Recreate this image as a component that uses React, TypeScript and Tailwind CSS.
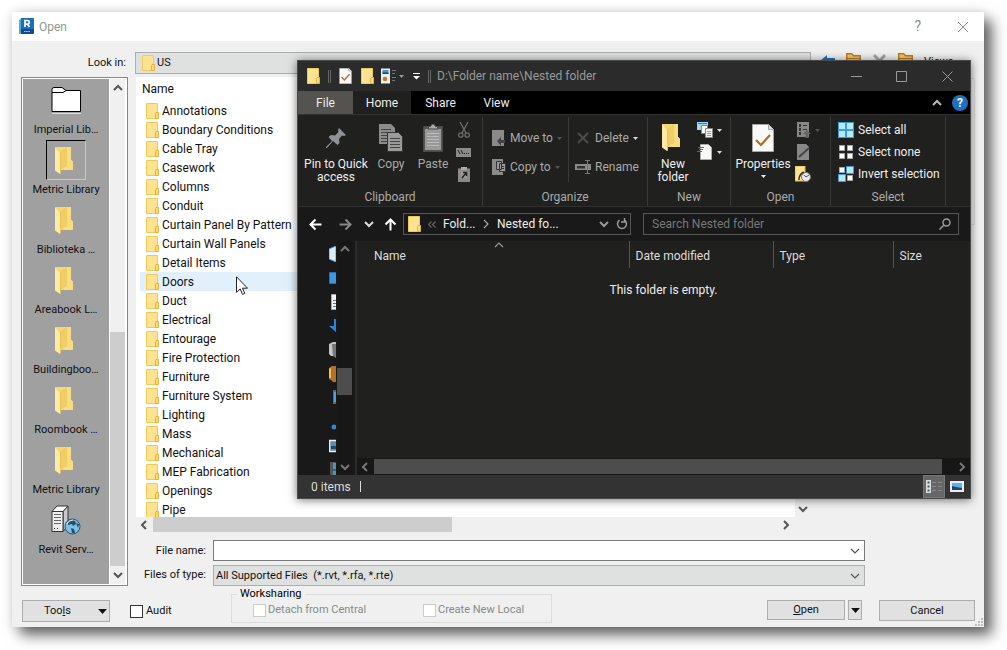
import type { ReactNode, SVGProps } from "react";
import { clsx } from "clsx";

const PLACES = [
  { label: "Imperial Lib…", icon: "outline" },
  { label: "Metric Library", icon: "folder", active: true },
  { label: "Biblioteka …", icon: "folder" },
  { label: "Areabook L…", icon: "folder" },
  { label: "Buildingboo…", icon: "folder" },
  { label: "Roombook …", icon: "folder" },
  { label: "Metric Library", icon: "folder" },
  { label: "Revit Serv…", icon: "server" },
];

const FOLDERS = [
  "Annotations",
  "Boundary Conditions",
  "Cable Tray",
  "Casework",
  "Columns",
  "Conduit",
  "Curtain Panel By Pattern",
  "Curtain Wall Panels",
  "Detail Items",
  "Doors",
  "Duct",
  "Electrical",
  "Entourage",
  "Fire Protection",
  "Furniture",
  "Furniture System",
  "Lighting",
  "Mass",
  "Mechanical",
  "MEP Fabrication",
  "Openings",
  "Pipe",
];

/* ---------- icons ---------- */

function FolderIcon({ className = "" }: { className?: string }) {
  return (
    <svg className={clsx("h-4 w-[13px] shrink-0", className)} viewBox="0 0 13 16">
      <path d="M.5.5h11v8.5h-1v6.500H.5z" fill="#ffe391" stroke="#efca5a" />
      <path d="M10 9.500h2.500v6H9.500v-5z" fill="#fbdc7c" stroke="#e3b33c" />
    </svg>
  );
}

function OpenFolderIcon({ className = "" }: { className?: string }) {
  return (
    <svg className={clsx("h-[27px] w-[18px] shrink-0", className)} viewBox="0 0 18 27">
      <path d="M0 0h16v13l2 2v8H4z" fill="#f7d774" />
      <path d="M9 0h7v13l2 2v8H9z" fill="#fade82" />
      <path d="M5 5l6-5h5v13l-4 6-7 4z" fill="#f1cd66" />
      <path d="M12 0h4v13l2 2v8h-6z" fill="#f9dc7f" />
      <path d="M0 0l5 6v21l-5-3.500z" fill="#fdeaa6" />
      <path d="M5 6v21l1-.5V5z" fill="#e9c355" />
    </svg>
  );
}

function OutlineFolderIcon() {
  return (
    <svg className="h-7 w-[31px]" viewBox="0 0 31 28">
      <path d="M1 27.500h29" stroke="#ddd" />
      <path d="M1 25.500V3.500q0-2 2-2h8l4 3h14.500v21H1z" fill="#fff" stroke="#000" />
      <path d="M1 6.500h11l3-2" fill="none" stroke="#000" />
    </svg>
  );
}

function ServerIcon() {
  return (
    <svg className="h-[30px] w-[30px]" viewBox="0 0 30 30">
      <path d="M1 6.500L6 1h11l-5 5.500z" fill="#fff" stroke="#333" />
      <path d="M12 6.500L17 1v20l-5 5.500z" fill="#c9c9c9" stroke="#333" />
      <path d="M1 6.500h11v20H1z" fill="#eee" stroke="#333" />
      <path d="M3 9.500h7M3 12.500h7M3 15.500h7M3 18.500h7" stroke="#666" />
      <path d="M3 23.500h1M6 23.500h1" stroke="#333" />
      <circle cx="21.500" cy="21.500" r="7.500" fill="#7cc0ea" stroke="#1c527c" />
      <path d="M17 17l3-2 4 1 1 3-3 2-1-2-4 1zM20 23l3 1 1 4-3 0zM25 18l3 1-1 4z" fill="#2b4d5e" />
      <path d="M16 19q2-4 6-4" fill="none" stroke="#d7f0ff" />
    </svg>
  );
}

type ChevronProps = { dir: "up" | "down" | "left" | "right"; className?: string; bold?: boolean };

const CHEVRONS = {
  up: "M1 7l4-4 4 4",
  down: "M1 3l4 4 4-4",
  left: "M7 1L3 5l4 4",
  right: "M3 1l4 4-4 4",
};

function Chevron({ dir, className = "", bold }: ChevronProps) {
  return (
    <svg className={clsx("h-[10px] w-[10px] shrink-0", className)} viewBox="0 0 10 10" fill="none" stroke="currentColor" strokeWidth={bold ? 2 : 1.2}>
      <path d={CHEVRONS[dir]} />
    </svg>
  );
}

function Caret({ className = "h-1 w-[7px]" }: { className?: string }) {
  return (
    <svg className={clsx("shrink-0", className)} viewBox="0 0 7 4" fill="currentColor">
      <path d="M0 0h7L3.500 4z" />
    </svg>
  );
}

function Glyph({ className = "", ...props }: SVGProps<SVGSVGElement>) {
  return <svg className={clsx("shrink-0", className)} fill="none" {...props} />;
}

function CheckDoc({ className = "" }: { className?: string }) {
  return (
    <Glyph className={className} viewBox="0 0 22 28">
      <path d="M.5.5h16l5 5v22H.5z" fill="#fafafa" stroke="#a5a5a5" />
      <path d="M16.500.5v5h5" fill="#ddd" stroke="#a5a5a5" />
      <path d="M4 16l5 5L18 11" stroke="#b06a22" strokeWidth="2.200" />
    </Glyph>
  );
}

function RevitLogo() {
  return (
    <svg className="h-[17px] w-[15px]" viewBox="0 0 15 17">
      <path d="M0 2l3-2v14l-2 2H0z" fill="#5aa7dd" />
      <path d="M2 0h12q1 0 1 1v10H2z" fill="#1a6fc0" />
      <path d="M2 11h13v4q0 1-1 1H2z" fill="#124a8c" />
      <path d="M6 9V2.500h2.500a1.800 1.800 0 010 3.600H6M8.500 6L10.500 9" fill="none" stroke="#fff" strokeWidth="1.700" />
      <path d="M5 13.500h6" stroke="#b7cde6" strokeDasharray="1.500 .7" />
    </svg>
  );
}

/* ---------- Revit "Open" dialog ---------- */

function TitleBar() {
  return (
    <header className="flex h-[29px] items-center bg-white pl-[7px] pr-[15px]">
      <RevitLogo />
      <h1 className="ml-[5px] text-[12px] text-[#8f9694]">Open</h1>
      <button aria-label="Help" className="ml-auto text-[14px] text-[#8a8a8a]">
        ?
      </button>
      <button aria-label="Close dialog" className="ml-9 text-[#8a8a8a]">
        <Glyph className="h-[12px] w-[12px]" viewBox="0 0 12 12" stroke="currentColor">
          <path d="M1 1l10 10M11 1L1 11" />
        </Glyph>
      </button>
    </header>
  );
}

function YellowFolder() {
  return (
    <Glyph className="h-[14px] w-[15px]" viewBox="0 0 15 14">
      <path d="M.7.700h5l2 2h6.600v10.600H.7z" fill="#f3c95c" stroke="#bf7a1e" strokeWidth="1.400" />
      <path d="M1 5.500h13" stroke="#bf7a1e" />
    </Glyph>
  );
}

function LookIn() {
  return (
    <div className="flex h-[22px] items-center">
      <label htmlFor="look-in" className="w-[105px] text-right">
        Look in:
      </label>
      <div className="ml-[9px] flex h-[22px] flex-1 items-center border border-[#adadad] bg-[#dfe0e0] pl-[6px] pr-1">
        <FolderIcon />
        <select id="look-in" className="ml-[2px] h-5 min-w-0 flex-1 appearance-none bg-transparent" defaultValue="US">
          <option>US</option>
        </select>
        <Chevron dir="down" className="text-[#555]" />
      </div>
      <div className="ml-[9px] flex w-[155px] items-start gap-[11px] self-start pt-px">
        <button aria-label="Back">
          <Glyph className="h-[14px] w-[15px]" viewBox="0 0 15 14">
            <path d="M0 8L7 2v3h8v6H7v3z" fill="#1f74c4" />
          </Glyph>
        </button>
        <button aria-label="Up one level">
          <YellowFolder />
        </button>
        <button aria-label="Delete">
          <Glyph className="h-[14px] w-[15px]" viewBox="0 0 15 14" stroke="#a5a5a5" strokeWidth="3">
            <path d="M2 2l11 12M13 2L2 14" />
          </Glyph>
        </button>
        <button aria-label="Create new folder">
          <YellowFolder />
        </button>
        <button className="flex flex-1 items-center justify-between pr-1 leading-[18px]">
          Views <Caret />
        </button>
      </div>
    </div>
  );
}

function PlacesBar() {
  return (
    <nav className="flex w-[107px] shrink-0 border border-[#828790] bg-white py-px pl-px pr-[2px]">
      <ul className="flex-1 bg-[#a0a0a0]">
        {PLACES.map((place, i) => (
          <li key={i}>
            <button className="flex h-[60px] w-full flex-col items-center pt-px">
              <span
                className={clsx(
                  "flex h-[40px] w-[40px] items-center justify-center",
                  place.active && "border border-b-[#c8c8c8] border-l-black border-r-[#c8c8c8] border-t-black",
                )}
              >
                {place.icon === "outline" && <OutlineFolderIcon />}
                {place.icon === "folder" && <OpenFolderIcon className="mr-1" />}
                {place.icon === "server" && <ServerIcon />}
              </span>
              <span className="mt-px leading-[18px] text-[#111]">{place.label}</span>
            </button>
          </li>
        ))}
      </ul>
      <div className="ml-px flex w-[15px] flex-col items-center bg-[#f0f0f0] py-1 text-[#555]">
        <Chevron dir="up" bold />
        <div className="mb-1 mt-[239px] w-full flex-1 bg-[#cdcdcd]" />
        <Chevron dir="down" bold />
      </div>
    </nav>
  );
}

function FolderList() {
  return (
    <section className="min-w-0 flex-1">
      <div className="flex">
        <div className="h-[440px] flex-1 overflow-hidden bg-white text-[12px]">
          <h2 className="h-6 pl-[6px] leading-6">Name</h2>
          <ul className="pl-1">
            {FOLDERS.map((name) => (
              <li key={name} className={clsx("flex h-[19px] items-center gap-[3px] pl-[6px]", name === "Doors" && "bg-[#e2f0fc]")}>
                <FolderIcon />
                {name}
              </li>
            ))}
          </ul>
        </div>
        <div className="flex w-4 items-end justify-center pb-[3px] text-[#555]">
          <Chevron dir="down" bold />
        </div>
      </div>
      <div className="flex h-[15px] items-center pl-[3px] pr-5 text-[#555]">
        <Chevron dir="left" bold />
        <div className="ml-1 h-full w-[299px] bg-[#cdcdcd]" />
        <Chevron dir="right" bold className="ml-auto" />
      </div>
    </section>
  );
}

function FileFields() {
  return (
    <div className="mr-[110px] mt-2 flex flex-col gap-1">
      <div className="flex items-center">
        <label htmlFor="file-name" className="w-[70px] shrink-0 pt-px text-right">
          File name:
        </label>
        <div className="ml-[7px] flex h-[21px] flex-1 items-center border border-[#7a7a7a] bg-white pr-1">
          <input id="file-name" className="h-full min-w-0 flex-1 px-1 outline-none" />
          <Chevron dir="down" className="text-[#555]" />
        </div>
      </div>
      <div className="flex items-center">
        <label htmlFor="file-type" className="w-[70px] shrink-0 text-right">
          Files of type:
        </label>
        <div className="ml-[7px] flex h-[21px] flex-1 items-center border border-[#adadad] bg-[#dfe0e0] pr-1">
          <select id="file-type" className="h-full min-w-0 flex-1 appearance-none pl-[2px] pt-px">
            <option>{"All Supported Files\u00a0 (*.rvt, *.rfa, *.rte)"}</option>
          </select>
          <Chevron dir="down" className="text-[#555]" />
        </div>
      </div>
    </div>
  );
}

const CHECKBOX = "h-[13px] w-[13px] appearance-none border bg-white";

function DialogFooter() {
  return (
    <footer className="mt-[6px] flex items-start pl-px">
      <button className="mt-2 flex h-[22px] w-[88px] items-center border border-[#adadad] bg-[#e1e1e1] pl-[21px] pr-[2px]">
        <span>
          Too<u>l</u>s
        </span>
        <Caret className="ml-auto h-[5px] w-[9px]" />
      </button>
      <label className="ml-5 mt-[11px] flex w-[101px] items-center gap-[3px]">
        <input type="checkbox" className={clsx(CHECKBOX, "border-[#333]")} />
        Audit
      </label>
      <fieldset disabled className="-mt-1 h-[35px] w-[321px] border border-[#dcdcdc] text-[#838c88]">
        <legend className="ml-[5px] px-[3px] leading-3 text-black">Worksharing</legend>
        <div className="flex items-center pl-[21px]">
          <label className="flex h-5 w-[170px] items-center gap-[2px]">
            <input type="checkbox" className={clsx(CHECKBOX, "border-[#ccc]")} />
            Detach from Central
          </label>
          <label className="flex h-5 items-center gap-[2px]">
            <input type="checkbox" className={clsx(CHECKBOX, "border-[#ccc]")} />
            Create New Local
          </label>
        </div>
      </fieldset>
      <button className="ml-auto mt-2 h-5 w-[78px] border border-[#adadad] bg-[#e1e1e1] leading-[18px]">
        <u>O</u>pen
      </button>
      <button aria-label="Open options" className="ml-[3px] mt-2 flex h-5 w-[14px] items-center justify-center border border-[#adadad] bg-[#e1e1e1]">
        <Caret className="h-[5px] w-[9px]" />
      </button>
      <button className="ml-[17px] mt-2 h-[21px] w-[96px] border border-[#adadad] bg-[#e1e1e1] pt-px">Cancel</button>
    </footer>
  );
}

/* ---------- Windows Explorer, dark theme ---------- */

function ExplorerTitle() {
  return (
    <header className="flex h-[30px] items-center bg-[#2b2b2b] pl-[9px] pr-[17px] text-[#999]">
      <FolderIcon />
      <span className="ml-2 h-[13px] w-[3px] border-x border-[#666]" />
      <CheckDoc className="ml-2 h-4 w-[13px]" />
      <FolderIcon className="ml-[9px]" />
      <Glyph className="ml-[7px] h-4 w-[16px]" viewBox="0 0 16 16">
        <path d="M0 .5h9v15H0z" fill="#eee" />
        <path d="M1.500 2h6v4h-6z" fill="#3f97d0" />
        <path d="M1.500 4.500h6V6h-6z" fill="#245" />
        <circle cx="4" cy="11" r="2.300" fill="#c07a35" />
        <path d="M11 2.500h4M11 5.500h3M11 9.500h4M11 12.500h3" stroke="#777" />
      </Glyph>
      <Caret className="ml-[2px] h-[3px] w-[5px]" />
      <Glyph className="ml-[9px] h-[7px] w-[7px] text-white" viewBox="0 0 7 7">
        <path d="M0 .5h7" stroke="currentColor" />
        <path d="M0 3h7L3.500 6.500z" fill="currentColor" />
      </Glyph>
      <span className="ml-2 h-[13px] w-[3px] border-x border-[#666]" />
      <span className="ml-[6px]">D:\Folder name\Nested folder</span>
      <button aria-label="Minimize" className="ml-auto">
        <Glyph className="h-[11px] w-[11px]" viewBox="0 0 11 11" stroke="currentColor">
          <path d="M0 5.500h11" />
        </Glyph>
      </button>
      <button aria-label="Maximize" className="ml-[34px]">
        <Glyph className="h-[11px] w-[11px]" viewBox="0 0 11 11" stroke="currentColor">
          <path d="M.5.500h10v10H.5z" />
        </Glyph>
      </button>
      <button aria-label="Close window" className="ml-[35px]">
        <Glyph className="h-[11px] w-[11px]" viewBox="0 0 11 11" stroke="currentColor">
          <path d="M.5.500l10 10M10.500.500l-10 10" />
        </Glyph>
      </button>
    </header>
  );
}

function Tabs() {
  return (
    <div className="flex h-[23px] items-stretch bg-black pr-[2px]">
      <button className="w-[55px] bg-[#555350]">File</button>
      <button className="w-[58px] bg-[#20201f]">Home</button>
      <button className="w-[59px]">Share</button>
      <button className="w-[53px]">View</button>
      <button aria-label="Collapse ribbon" className="ml-auto mr-[10px] text-[#bbb]">
        <Chevron dir="up" bold />
      </button>
      <button aria-label="Explorer help" className="my-1 h-4 w-4 rounded-full bg-[#1e6fc0] text-[12px] font-bold leading-4 text-white">
        ?
      </button>
    </div>
  );
}

function Group({ label, className, children }: { label: string; className: string; children: ReactNode }) {
  return (
    <section className={clsx("flex flex-col border-r border-[#3a3a3a]", className)}>
      <div className="flex h-[72px] items-start">{children}</div>
      <h3 className="text-center leading-[18px] text-[#aaa]">{label}</h3>
    </section>
  );
}

function BigButton({ className, icon, children }: { className: string; icon: ReactNode; children: ReactNode }) {
  return (
    <button className={clsx("flex flex-col items-center leading-[13px]", className)}>
      <span className="flex h-[41px] items-center">{icon}</span>
      {children}
    </button>
  );
}

function SmallButton({ icon, caret, className, children }: { icon: ReactNode; caret?: string; className?: string; children?: ReactNode }) {
  return (
    <button className={clsx("flex h-[22px] items-center gap-1 whitespace-nowrap", className)}>
      {icon}
      {children}
      {caret && <Caret className={clsx("h-[3px] w-[5px]", caret)} />}
    </button>
  );
}

function Ribbon() {
  return (
    <div className="flex h-[92px] border-t border-[#333] bg-[#20201f] pt-[2px]">
      <Group label="Clipboard" className="w-[185px]">
        <BigButton
          className="ml-1 w-[68px]"
          icon={
            <Glyph className="h-5 w-5" viewBox="0 0 20 20" fill="#8e9296">
              <path d="M13 0l7 7-2 1-2-.5-3 3.500.5 4-2 2-4.500-4L1 20H0v-1l6-6-3.500-4L5 7l4 .5L12.500 4 12 2z" fill="#8e9296" />
            </Glyph>
          }
        >
          Pin to Quick access
        </BigButton>
        <BigButton
          className="w-[42px] text-[#aaa]"
          icon={
            <Glyph className="h-7 w-6" viewBox="0 0 24 28">
              <path d="M0 0h12l4 4v16H0z" fill="#8d8d8d" />
              <path d="M2 5.500h10M2 8.500h10M2 11.500h6M2 14.500h6M2 17.500h6" stroke="#444" />
              <path d="M8.500 8.500h11l4 4v15h-15z" fill="#9a9a9a" stroke="#333" />
              <path d="M11 14.500h10M11 17.500h10M11 20.500h10M11 23.500h10" stroke="#444" />
            </Glyph>
          }
        >
          Copy
        </BigButton>
        <BigButton
          className="w-[42px] text-[#aaa]"
          icon={
            <Glyph className="h-7 w-5" viewBox="0 0 20 28">
              <path d="M.5 2.500h19v25H.5z" fill="#555" stroke="#4a4a4a" />
              <path d="M2 5h16v21H2z" fill="#999" />
              <path d="M5 5q0-3 3-3 0-2 2-2t2 2q3 0 3 3z" fill="#aaa" stroke="#444" />
              <path d="M4 9.500h12M4 12.500h12M4 15.500h12M4 18.500h12M4 21.500h12" stroke="#bbb" />
            </Glyph>
          }
        >
          Paste
        </BigButton>
        <div className="ml-[2px] flex flex-col items-center pt-[2px]">
          <SmallButton
            icon={
              <Glyph className="h-4 w-3" viewBox="0 0 12 16" stroke="#6d6d6d" strokeWidth="1.300">
                <path d="M2 0l6 11M10 0L4 11" />
                <circle cx="2.800" cy="13" r="2.200" />
                <circle cx="9.200" cy="13" r="2.200" />
              </Glyph>
            }
          />
          <SmallButton
            icon={
              <Glyph className="h-[9px] w-[15px]" viewBox="0 0 15 9">
                <path d="M0 0h15v9H0z" fill="#8a8a8a" />
                <path d="M2 2l2 4M5 2l2 4M8 5.500h1M10 5.500h1M12 5.500h1" stroke="#222" />
              </Glyph>
            }
          />
          <SmallButton
            icon={
              <Glyph className="h-[15px] w-3" viewBox="0 0 12 15">
                <path d="M0 1.500h12V15H0z" fill="#8a8a8a" />
                <path d="M3 0h6v3H3z" fill="#aaa" />
                <path d="M3 4h6v7H3z" fill="#999" />
                <path d="M4 11l4-5M5 5.500h3.500V9" stroke="#222" strokeWidth="1.400" />
              </Glyph>
            }
          />
        </div>
      </Group>

      <Group label="Organize" className="w-[165px] text-[#aaa]">
        <div className="flex w-[86px] flex-col gap-[7px] border-r border-[#3a3a3a] pb-1 pl-[9px] pt-[10px]">
          <SmallButton
            caret="text-[#555]"
            icon={
              <Glyph className="h-4 w-[14px]" viewBox="0 0 14 16">
                <path d="M0 0h12v16H0z" fill="#8a8a8a" />
                <path d="M5 11l4-4v3h4v3H9v3z" fill="#444" />
              </Glyph>
            }
          >
            Move to
          </SmallButton>
          <SmallButton
            caret="text-[#555]"
            icon={
              <Glyph className="h-4 w-[14px]" viewBox="0 0 14 16">
                <path d="M0 0h11v16H0z" fill="#8a8a8a" />
                <path d="M4.500 2.500h5v8h-5zM7.500 4.500h6v8h-6z" fill="#999" stroke="#333" />
                <path d="M9 7.500h3M9 9.500h3" stroke="#333" />
              </Glyph>
            }
          >
            Copy to
          </SmallButton>
        </div>
        <div className="flex flex-col gap-[7px] pl-[6px] pt-[10px]">
          <SmallButton
            caret="text-[#ddd]"
            icon={
              <Glyph className="h-4 w-4" viewBox="0 0 16 16" stroke="#4c4c4c" strokeWidth="2">
                <path d="M3 3l10 10M13 3L3 13" />
              </Glyph>
            }
          >
            Delete
          </SmallButton>
          <SmallButton
            icon={
              <Glyph className="h-4 w-4" viewBox="0 0 16 16">
                <path d="M0 5h16v6H0z" fill="#8a8a8a" />
                <path d="M2 7h8v2.500H2z" fill="#333" />
                <path d="M10 1.500h5M10 14.500h5M12.500 2v12" stroke="#777" />
              </Glyph>
            }
          >
            Rename
          </SmallButton>
        </div>
      </Group>

      <Group label="New" className="w-[83px]">
        <BigButton className="ml-1 w-[42px]" icon={<OpenFolderIcon className="mr-1" />}>
          New folder
        </BigButton>
        <div className="ml-[3px] flex flex-col pt-[2px]">
          <SmallButton
            caret="text-[#ddd]"
            icon={
              <Glyph className="h-4 w-4" viewBox="0 0 16 16">
                <path d="M0 0h11v8H0z" fill="#9fd8f5" />
                <path d="M1 1.500h9" stroke="#1d86c8" />
                <path d="M4.500 3.500h6v8h-6z" fill="#fff" stroke="#888" />
                <path d="M8.500 6.500h7v9h-7z" fill="#eef5f3" stroke="#888" />
                <path d="M10 9.500h4M10 11.500h4M10 13.500h4" stroke="#79b0a8" />
              </Glyph>
            }
          />
          <SmallButton
            caret="text-[#ddd]"
            icon={
              <Glyph className="h-4 w-4" viewBox="0 0 16 16">
                <path d="M3.500.500h8l3 3v12h-11z" fill="#fafafa" stroke="#aaa" />
                <path d="M1 3.500h6M2 5.500h4M0 7.500h5" stroke="#2b72b8" />
              </Glyph>
            }
          />
        </div>
      </Group>

      <Group label="Open" className="w-[100px]">
        <BigButton className="w-[64px]" icon={<CheckDoc className="h-7 w-[22px]" />}>
          Properties
          <Caret className="mt-1 h-[3px] w-[5px]" />
        </BigButton>
        <div className="flex flex-col pt-[2px]">
          <SmallButton
            caret="text-[#555]"
            icon={
              <Glyph className="h-4 w-4" viewBox="0 0 16 16">
                <path d="M2 0h12v15H2z" fill="#888" />
                <path d="M4 2h2v3H4zM4 6h2v3H4zM4 10h2v3H4z" fill="#333" />
                <path d="M8 3.500h4M8 7.500h4" stroke="#333" />
                <path d="M12 8l4 4h-2.500v4h-3v-4H8z" fill="#666" />
              </Glyph>
            }
          />
          <SmallButton
            icon={
              <Glyph className="h-4 w-4" viewBox="0 0 16 16">
                <path d="M2 0h9l3 3v13H2z" fill="#888" />
                <path d="M4 13l10-9" stroke="#444" strokeWidth="2" />
              </Glyph>
            }
          />
          <SmallButton
            icon={
              <Glyph className="h-4 w-4" viewBox="0 0 16 16">
                <path d="M0 0h10v15H0z" fill="#ffe391" stroke="#e6bb45" />
                <circle cx="11" cy="11" r="4.500" fill="#e8e8e8" stroke="#777" />
                <path d="M11 11l3-2M11 11l-2-2" stroke="#555" />
                <path d="M4 14q0-6 5-8" stroke="#333" strokeWidth="1.500" />
              </Glyph>
            }
          />
        </div>
      </Group>

      <Group label="Select" className="w-[115px]">
        <div className="flex flex-col pl-[7px] pt-[2px]">
          <SmallButton
            icon={
              <Glyph className="h-4 w-4" viewBox="0 0 16 16">
                <path d="M0 0h16v16H0z" fill="#3f9ae0" />
                <path d="M1 1h6v6H1zM9 1h6v6H9zM1 9h6v6H1zM9 9h6v6H9z" fill="#b5ebf7" />
              </Glyph>
            }
          >
            Select all
          </SmallButton>
          <SmallButton
            icon={
              <Glyph className="h-4 w-4" viewBox="0 0 16 16" fill="#fff" stroke="#aaa">
                <path d="M1.500 1.500h5v5h-5zM9.500 1.500h5v5h-5zM1.500 9.500h5v5h-5zM9.500 9.500h5v5h-5z" fill="#fff" />
              </Glyph>
            }
          >
            Select none
          </SmallButton>
          <SmallButton
            icon={
              <Glyph className="h-4 w-4" viewBox="0 0 16 16">
                <path d="M1.500 1.500h5v5h-5zM9.500 9.500h5v5h-5z" fill="#fff" stroke="#aaa" />
                <path d="M8.500.500h7v7h-7zM.500 8.500h7v7h-7z" fill="#b5ebf7" stroke="#3f9ae0" />
              </Glyph>
            }
          >
            Invert selection
          </SmallButton>
        </div>
      </Group>
    </div>
  );
}

function ArrowIcon({ d, className }: { d: string; className: string }) {
  return (
    <Glyph className={clsx("h-[13px] w-[13px]", className)} viewBox="0 0 13 13" stroke="currentColor" strokeWidth="2">
      <path d={d} />
    </Glyph>
  );
}

function AddressRow() {
  return (
    <div className="flex h-[35px] items-center border-t border-[#2e2e2e] bg-[#191919] pl-[11px] pr-[11px]">
      <button aria-label="Back">
        <ArrowIcon d="M12.500 6.500H2M6.500 1.500l-5 5 5 5" className="text-white" />
      </button>
      <button aria-label="Forward" className="ml-[17px]">
        <ArrowIcon d="M.5 6.500H11M6.500 1.500l5 5-5 5" className="text-[#888]" />
      </button>
      <button aria-label="Recent locations" className="ml-3 text-[#ddd]">
        <Chevron dir="down" bold className="h-[7px] w-[7px]" />
      </button>
      <button aria-label="Up" className="ml-[10px]">
        <ArrowIcon d="M6.500 12.500V2M1.500 6.500l5-5 5 5" className="text-white" />
      </button>
      <div className="ml-[6px] flex h-[22px] w-[228px] items-center border border-[#555] pl-1">
        <FolderIcon />
        <Glyph className="ml-[7px] h-[7px] w-2" viewBox="0 0 8 7" stroke="#666" strokeWidth="1.200">
          <path d="M3.500.500l-3 3 3 3M7.500.500l-3 3 3 3" />
        </Glyph>
        <button className="ml-[7px] w-[38px] text-left">Fold...</button>
        <Chevron dir="right" className="text-[#aaa]" />
        <button className="ml-[6px]">Nested fo...</button>
        <button aria-label="Previous locations" className="ml-auto mr-[7px] text-[#999]">
          <Chevron dir="down" bold />
        </button>
        <button aria-label="Refresh" className="mr-[2px] text-[#999]">
          <Glyph className="h-3 w-3" viewBox="0 0 12 12" stroke="currentColor" strokeWidth="1.500">
            <path d="M8.500 2.200a4.500 4.500 0 11-5 0M8.500 0v4H5" />
          </Glyph>
        </button>
      </div>
      <div className="ml-3 flex h-[22px] flex-1 items-center border border-[#555] pl-2 pr-[7px]">
        <input aria-label="Search" placeholder="Search Nested folder" className="min-w-0 flex-1 outline-none placeholder:text-[#777]" />
        <Glyph className="h-3 w-3" viewBox="0 0 12 12" stroke="#999" strokeWidth="1.500">
          <circle cx="7.500" cy="4.500" r="3.500" />
          <path d="M5 7L.5 11.500" />
        </Glyph>
      </div>
    </div>
  );
}

// Only the left halves show: the scrollbar cuts the tree off.
const TREE_ICONS: ReactNode[] = [
  <path key="3d" d="M0 3l7-3v16l-7-3z" fill="#d8edf8" stroke="#49a0dc" />,
  <path key="desktop" d="M.5 2.500h8v11h-8z" fill="#3f97e0" stroke="#1d6fb8" />,
  <g key="documents">
    <path d="M2.500.500h6v15h-6z" fill="#f5f5f5" stroke="#aaa" />
    <path d="M4 6.500h4M4 9.500h4M4 12.500h4" stroke="#3f7fb8" />
  </g>,
  <path key="downloads" d="M5 1h3v14L0 8h5z" fill="#2f83d6" />,
  <g key="music">
    <path d="M0 2l4-2h3v14H2l-2-2z" fill="#c4c4c4" />
    <path d="M3 2h4v14l-3-2z" fill="#777" />
  </g>,
  <g key="objects">
    <path d="M0 2l3-2h4v16H4l-2-2-2-1z" fill="#b5702c" />
    <path d="M0 3l2-1v10H0z" fill="#f0c050" />
  </g>,
  <g key="phone">
    <path d="M4 0h4v14H4z" fill="#666" />
    <path d="M5 2h3v10H5z" fill="#49a0ee" />
  </g>,
  <circle key="cloud" cx="5" cy="13" r="2.500" fill="#2f88dc" />,
  <g key="pictures">
    <path d="M.5 2.500h8v11h-8z" fill="#4f93bd" stroke="#eee" strokeWidth="1.500" />
    <path d="M2 8h6v3H2z" fill="#345" />
  </g>,
  <g key="videos">
    <path d="M1 0h6v16H1z" fill="#555" />
    <path d="M4 1h3v6H4zM4 9h3v6H4z" fill="#3f97d0" />
  </g>,
];

function ExplorerBody() {
  return (
    <div className="flex h-[234px] bg-[#20201e]">
      <div className="flex w-[57px] bg-[#191919]">
        <ul className="ml-[31px] w-[7px] overflow-hidden pt-[5px]">
          {TREE_ICONS.map((icon, i) => (
            <li key={i} className="h-6">
              <svg className="h-4 w-[7px]" viewBox="0 0 7 16">
                {icon}
              </svg>
            </li>
          ))}
        </ul>
        <div className="ml-px flex w-[15px] flex-col items-center bg-[#171717] py-[3px] text-[#777]">
          <Chevron dir="up" bold />
          <div className="mt-[114px] h-[27px] w-full bg-[#4d4d4d]" />
          <Chevron dir="down" bold className="mt-auto" />
        </div>
      </div>
      <div className="flex min-w-0 flex-1 flex-col border-l-2 border-[#2b2b2b]">
        <table className="w-full table-fixed border-collapse text-left">
          <thead>
            <tr className="h-[27px] text-[#ddd]">
              <th className="w-[272px] border-r border-[#555] pl-[17px] font-normal">
                <div className="relative pt-[2px]">
                  Name
                  <Chevron dir="up" className="absolute -top-[5px] left-[120px] text-[#999]" />
                </div>
              </th>
              <th className="w-[144px] border-r border-[#555] pl-[6px] pt-[2px] font-normal">Date modified</th>
              <th className="w-[120px] border-r border-[#555] pl-[6px] pt-[2px] font-normal">Type</th>
              <th className="pl-[6px] pt-[2px] font-normal">Size</th>
            </tr>
          </thead>
          <tbody>
            <tr>
              <td colSpan={4} className="pt-[13px] text-center">
                This folder is empty.
              </td>
            </tr>
          </tbody>
        </table>
        <div className="mt-auto flex h-[17px] items-center border-y border-[#171717] bg-[#171717] pl-[3px] pr-[3px] text-[#777]">
          <Chevron dir="left" bold />
          <div className="ml-1 mr-[15px] h-full flex-1 bg-[#4d4d4d]" />
          <Chevron dir="right" bold />
        </div>
      </div>
    </div>
  );
}

function StatusBar() {
  return (
    <footer className="flex h-[23px] items-center bg-[#333] pl-[13px] text-[#ddd]">
      <span className="pt-px">0 items</span>
      <span className="ml-[9px] h-[11px] w-px bg-[#ddd]" />
      <button aria-label="Details view" className="ml-auto flex h-[23px] w-[22px] items-center justify-center border border-[#777] bg-[#666]">
        <Glyph className="h-[13px] w-4" viewBox="0 0 16 13">
          <path d="M0 0h5v13H0z" fill="#ddd" />
          <path d="M1.500 1.500h2v2h-2zM1.500 5.500h2v2h-2zM1.500 9.500h2v2h-2z" fill="#456" />
          <path d="M6 2.500h4M12 2.500h4M6 6.500h4M12 6.500h4M6 10.500h4M12 10.500h4" stroke="#888" />
        </Glyph>
      </button>
      <button aria-label="Thumbnail view" className="mr-px flex w-6 justify-center">
        <Glyph className="h-[11px] w-[14px]" viewBox="0 0 14 11">
          <path d="M0 0h14v11H0z" fill="#eee" />
          <path d="M2 2h10v7H2z" fill="#5fb2ea" />
          <path d="M2 5l4 1 6 1v2H2z" fill="#246" />
        </Glyph>
      </button>
    </footer>
  );
}

function ExplorerWindow() {
  return (
    <section className="absolute left-[285px] right-[13px] top-[48px] overflow-hidden border border-[#4a4a4a] bg-[#191919] text-[12px] text-[#eee] shadow-[0_1px_9px_rgba(0,0,0,0.55)]">
      <ExplorerTitle />
      <Tabs />
      <Ribbon />
      <AddressRow />
      <ExplorerBody />
      <StatusBar />
    </section>
  );
}

export default function App() {
  return (
    <div className="min-h-screen bg-white pb-[23px] pl-3 pr-[23px] pt-3 font-[Roboto,'Open_Sans',sans-serif] text-[11px] text-[#111]">
      <main className="relative bg-[#f0f0f0] shadow-[8px_8px_13px_rgba(0,0,0,0.6),0_0_12px_rgba(0,0,0,0.12)]">
        <TitleBar />
        <div className="px-[9px] pb-1 pt-[11px]">
          <LookIn />
          <div className="mt-[3px] flex gap-2">
            <PlacesBar />
            <div className="min-w-0 flex-1">
              <div className="flex">
                <FolderList />
                <div className="ml-[9px] mt-px h-[147px] w-[155px] border border-[#dcdcdc]" />
              </div>
              <FileFields />
            </div>
          </div>
          <DialogFooter />
        </div>
        <svg className="absolute bottom-0 right-0 h-[9px] w-[9px]" viewBox="0 0 9 9" fill="#bfbfbf">
          <path d="M6 0h2v2H6zM3 3h2v2H3zM6 3h2v2H6zM0 6h2v2H0zM3 6h2v2H3zM6 6h2v2H6z" />
        </svg>
        <ExplorerWindow />
        <svg className="absolute left-[224px] top-[264px] h-5 w-3" viewBox="0 0 12 20">
          <path d="M.5.800v15.500l3.700-3.400 2.300 5.500 2.300-1-2.300-5.200h5z" fill="#fff" stroke="#222" />
        </svg>
      </main>
    </div>
  );
}
